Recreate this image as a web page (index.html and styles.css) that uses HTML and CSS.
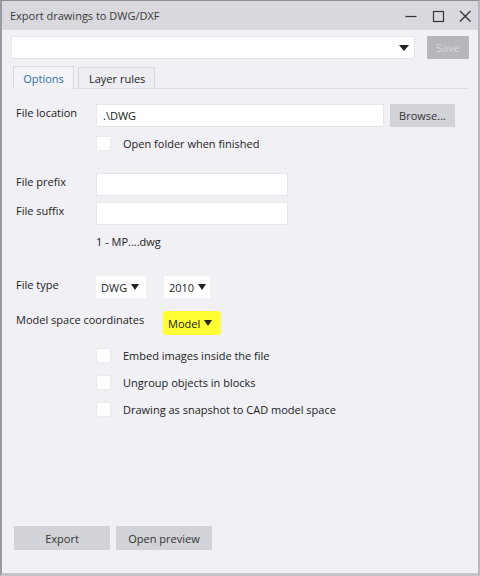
FILE: index.html
```html
<!DOCTYPE html>
<html>
<head>
<meta charset="utf-8">
<link rel="stylesheet" href="styles.css">
</head>
<body>
<div class="window">
  <div class="titlebar">
    <span class="title">Export drawings to DWG/DXF</span>
    <div class="wctrls">
      <svg class="wbtn" width="14" height="14" viewBox="0 0 14 14"><path d="M1.5 7.5h11" stroke="#333" stroke-width="1.2"/></svg>
      <svg class="wbtn" width="14" height="14" viewBox="0 0 14 14"><rect x="2.5" y="2.5" width="10" height="10" fill="none" stroke="#333" stroke-width="1.2"/></svg>
      <svg class="wbtn" width="14" height="14" viewBox="0 0 14 14"><path d="M2 2l10.5 10.5M12.5 2L2 12.5" stroke="#333" stroke-width="1.3"/></svg>
    </div>
  </div>
  <div class="content">
    <div class="toprow">
      <div class="combo"><span class="arrow"></span></div>
      <button class="save">Save</button>
    </div>
    <div class="tabs">
      <div class="tab active">Options</div>
      <div class="tab">Layer rules</div>
    </div>
    <div class="form">
      <div class="row r-loc">
        <div class="label">File location</div>
        <div class="input loc">.\DWG</div>
        <button class="btn browse">Browse...</button>
      </div>
      <div class="row crow r-check1">
        <span class="check"></span><span class="ctext">Open folder when finished</span>
      </div>
      <div class="row r-prefix">
        <div class="label">File prefix</div>
        <div class="input short"></div>
      </div>
      <div class="row r-suffix">
        <div class="label">File suffix</div>
        <div class="input short"></div>
      </div>
      <div class="row r-sample">
        <span class="sample">1 - MP....dwg</span>
      </div>
      <div class="row r-type">
        <div class="label">File type</div>
        <div class="drop dwg">DWG<span class="tri"></span></div>
        <div class="drop ver">2010<span class="tri"></span></div>
      </div>
      <div class="row r-model">
        <div class="label wide">Model space coordinates</div>
        <div class="drop model">Model<span class="tri"></span></div>
      </div>
      <div class="row crow r-c2">
        <span class="check"></span><span class="ctext">Embed images inside the file</span>
      </div>
      <div class="row crow r-c3">
        <span class="check"></span><span class="ctext">Ungroup objects in blocks</span>
      </div>
      <div class="row crow r-c4">
        <span class="check"></span><span class="ctext">Drawing as snapshot to CAD model space</span>
      </div>
    </div>
    <div class="footer">
      <button class="btn fbtn">Export</button>
      <button class="btn fbtn">Open preview</button>
    </div>
  </div>
</div>
</body>
</html>
```

FILE: styles.css
```css
* { box-sizing: border-box; }
html, body { margin: 0; padding: 0; }
body {
  width: 480px;
  height: 576px;
  background: #9c9ca4;
  font-family: "Open Sans", "Noto Sans", sans-serif;
  font-size: 11px;
  color: #222;
}
.window {
  width: 480px;
  height: 576px;
  border: 1px solid #8e8e96;
  border-left: 2px solid #9a9aa2;
  border-right: 2px solid #b8b8c0;
  border-bottom: 3px solid #c4c4cc;
  display: flex;
  flex-direction: column;
  background: #f0f0f5;
}
.titlebar {
  height: 29px;
  background: #d8d8de;
  display: flex;
  align-items: center;
  padding-left: 8px;
  flex: none;
}
.title { color: #3a3a3a; font-size: 11px; }
.wctrls {
  margin-left: auto;
  display: flex;
  gap: 13px;
  padding-right: 6px;
}
.content {
  flex: 1;
  display: flex;
  flex-direction: column;
  padding: 6px 8px 0 9px;
}
.toprow { display: flex; height: 23px; }
.combo {
  width: 404px;
  height: 23px;
  background: #fff;
  border: 1px solid #e4e4ea;
  position: relative;
}
.arrow {
  position: absolute;
  right: 5px;
  top: 8px;
  border-left: 5px solid transparent;
  border-right: 5px solid transparent;
  border-top: 6px solid #222;
}
.save {
  margin-left: 12px;
  width: 42px;
  height: 23px;
  border: none;
  background: #b6b6bd;
  color: #d6d6dc;
  font: inherit;
  padding: 0;
}
.tabs {
  display: flex;
  margin-top: 8px;
  margin-left: 2px;
  width: 456px;
  height: 22px;
  border-bottom: 1px solid #dcdce2;
  align-items: flex-end;
}
.tab {
  height: 21px;
  padding: 0 9px 0 10px;
  display: flex;
  align-items: center;
  border: 1px solid #d8d8de;
  border-bottom: none;
  background: #ededf2;
  color: #222;
  margin-right: 4px;
}
.tab.active {
  height: 23px;
  width: 61px;
  margin-bottom: -1px;
  color: #2a6ea6;
  background: #f4f4f8;
  justify-content: center;
  padding: 0;
}
.form { padding-left: 5px; margin-top: 15px; }
.row { display: flex; align-items: flex-start; }
.label { width: 80px; flex: none; line-height: 18px; }
.label.wide { width: 147px; }
.input {
  height: 23px;
  background: #fff;
  border: 1px solid #e6e6ec;
  padding-left: 6px;
  display: flex;
  align-items: center;
}
.input.loc { width: 288px; }
.input.short { width: 192px; }
.btn {
  border: none;
  background: #d2d2d9;
  font: inherit;
  color: #333;
  padding: 0;
}
.browse { margin-left: 6px; width: 65px; height: 23px; }
.crow { height: 15px; padding-left: 80px; align-items: center; }
.check {
  width: 15px;
  height: 15px;
  background: #fff;
  border: 1px solid #eaeaee;
  flex: none;
}
.ctext { margin-left: 12px; line-height: 15px; }
.r-check1 { margin-top: 9px; }
.r-prefix { margin-top: 22px; }
.r-suffix { margin-top: 6px; }
.r-sample { margin-top: 8px; padding-left: 80px; height: 17px; align-items: center; }
.r-type { margin-top: 26px; height: 22px; }
.drop {
  height: 22px;
  background: #fff;
  display: flex;
  align-items: center;
  padding-left: 5px;
}
.tri {
  display: inline-block;
  margin-left: 4px;
  border-left: 4px solid transparent;
  border-right: 4px solid transparent;
  border-top: 6px solid #222;
}
.dwg { width: 50px; }
.ver { width: 46px; margin-left: 18px; }
.r-model { margin-top: 13px; height: 24px; }
.model {
  width: 58px;
  height: 24px;
  background: #ffff33;
  border-radius: 3px;
  padding-left: 5px;
}
.r-c2 { margin-top: 13px; }
.r-c3 { margin-top: 12px; }
.r-c4 { margin-top: 12px; }
.footer {
  margin-top: auto;
  margin-bottom: 23px;
  margin-left: 3px;
  display: flex;
  gap: 6px;
}
.fbtn { width: 96px; height: 24px; }
```
